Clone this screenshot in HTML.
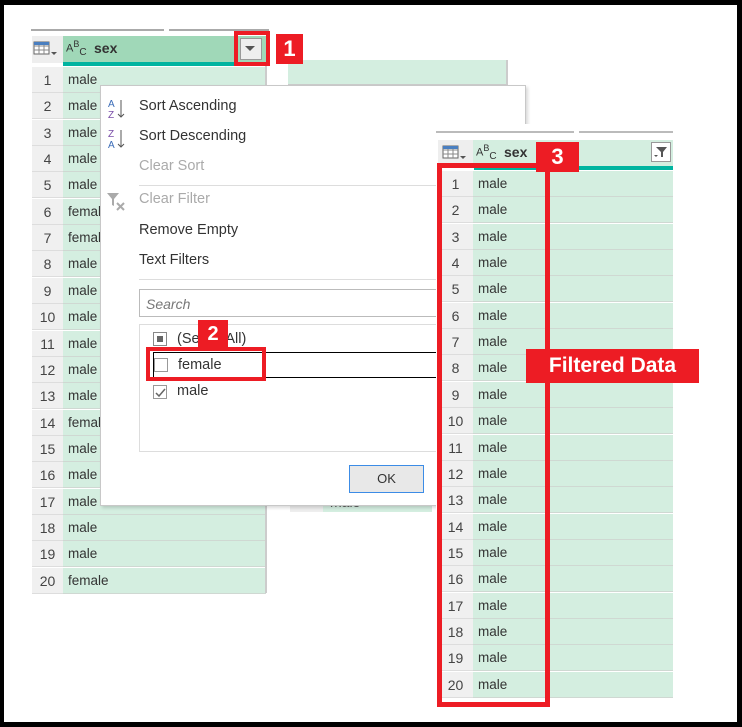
<!DOCTYPE html>
<html><head><meta charset="utf-8"><style>
*{margin:0;padding:0;box-sizing:border-box}
body{width:742px;height:727px;background:#000;position:relative;overflow:hidden;font-family:"Segoe UI","Liberation Sans","DejaVu Sans",sans-serif;font-size:13.5px;color:#333}
.frame{position:absolute;left:4px;top:5px;width:733px;height:717px;background:#fff;overflow:hidden}
.abs{position:absolute}
.num{position:absolute;background:#f0f0f0;color:#444;text-align:center;font-size:14px;line-height:26px;border-bottom:1px solid #ddd}
.cell{position:absolute;background:#d4eee0;line-height:26px;padding-left:5px;border-bottom:1px solid #cfd8d2}
.red{position:absolute;border:4px solid #ed1c24}
.lab{position:absolute;background:#ed1c24;color:#fff;font-weight:bold;text-align:center;font-family:"Liberation Sans",sans-serif}
.mi{position:absolute;left:139px;font-size:14.5px;color:#333}
.dis{color:#aaa}
</style></head><body>
<div class="frame">
<div style="position:absolute;left:-4px;top:-5px;width:742px;height:727px">
<div class="abs" style="left:31px;top:29px;width:133px;height:2px;background:#aaa"></div>
<div class="abs" style="left:169px;top:29px;width:100px;height:2px;background:#aaa"></div>
<div class="abs" style="left:32px;top:36px;width:31px;height:27px;background:#eee"></div>
<svg class="abs" style="left:33px;top:41px" width="26" height="16"><rect x="1" y="1" width="15" height="12" fill="#fff" stroke="#666"/><path d="M1 5H16M1 9H16M6 1V13M11 1V13" stroke="#888"/><rect x="1" y="1" width="15" height="3" fill="#4a7fc0"/><path d="M18 11l3 3 3-3z" fill="#555"/></svg>
<div class="abs" style="left:63px;top:36px;width:203px;height:27px;background:#a0d8b8"></div>
<div class="abs" style="left:63px;top:62px;width:203px;height:4px;background:#00b4a0"></div>
<div class="abs" style="left:66px;top:39px;font-size:11px;color:#333">A<sup style="font-size:9px">B</sup><sub style="font-size:10px">C</sub></div>
<div class="abs" style="left:94px;top:40px;font-weight:bold;font-size:14px">sex</div>
<div class="abs" style="left:240px;top:38px;width:22px;height:22px;background:#eee;border:1px solid #999"></div>
<svg class="abs" style="left:245px;top:46px" width="12" height="6"><path d="M0 0h10l-5 5z" fill="#555"/></svg>
<div id="lrows"></div>
<div class="abs" style="left:265px;top:66px;width:2px;height:527px;background:#ccc"></div>
<div class="abs" style="left:288px;top:60px;width:220px;height:26px;background:#d4eee0;border-right:2px solid #ccc;border-bottom:2px solid #ccc"></div>
<div class="abs" style="left:290px;top:492px;width:142px;height:20px;background:#d4eee0"></div>
<div class="abs" style="left:290px;top:492px;width:33px;height:20px;background:#eee"></div>
<div class="abs" style="left:330px;top:494px;font-size:14px;color:#555">male</div>
<div class="abs" style="left:100px;top:85px;width:426px;height:421px;background:#fff;border:1px solid #c8c8c8;box-shadow:2px 2px 3px rgba(0,0,0,.15)"></div>
<svg class="abs" style="left:107px;top:97px" width="22" height="24"><text x="1" y="10" font-size="10" fill="#3b6cb8" font-family="Liberation Sans">A</text><text x="1" y="21" font-size="10" fill="#7a4ea8" font-family="Liberation Sans">Z</text><path d="M14 3V20M11 17l3 3 3-3" stroke="#555" fill="none"/></svg>
<svg class="abs" style="left:107px;top:127px" width="22" height="24"><text x="1" y="10" font-size="10" fill="#7a4ea8" font-family="Liberation Sans">Z</text><text x="1" y="21" font-size="10" fill="#3b6cb8" font-family="Liberation Sans">A</text><path d="M14 3V20M11 17l3 3 3-3" stroke="#555" fill="none"/></svg>
<div class="mi" style="top:98px">Sort Ascending</div>
<div class="mi" style="top:128px">Sort Descending</div>
<div class="mi dis" style="top:158px">Clear Sort</div>
<div class="abs" style="left:139px;top:185px;width:387px;height:1px;background:#ddd"></div>
<svg class="abs" style="left:106px;top:191px" width="22" height="22"><path d="M1 2h12l-5 6v7l-2-1V8z" fill="#aaa"/><path d="M11 12l7 7M18 12l-7 7" stroke="#aaa" stroke-width="2"/></svg>
<div class="mi dis" style="top:191px">Clear Filter</div>
<div class="mi" style="top:222px">Remove Empty</div>
<div class="mi" style="top:252px">Text Filters</div>
<div class="abs" style="left:139px;top:279px;width:387px;height:1px;background:#ddd"></div>
<div class="abs" style="left:139px;top:289px;width:300px;height:28px;border:1px solid #bbb"></div>
<div class="abs" style="left:146px;top:296px;font-style:italic;color:#777;font-size:14px">Search</div>
<div class="abs" style="left:139px;top:324px;width:300px;height:128px;border:1px solid #ddd"></div>
<div class="abs" style="left:153px;top:332px;width:14px;height:14px;border:1px solid #888;background:#fff"></div>
<div class="abs" style="left:157px;top:336px;width:6px;height:6px;background:#666"></div>
<div class="abs" style="left:177px;top:331px;font-size:14.5px">(Select All)</div>
<div class="abs" style="left:153px;top:352px;width:290px;height:26px;border-top:1px solid #000;border-bottom:1px solid #000;border-left:1px solid #000"></div>
<div class="abs" style="left:154px;top:358px;width:14px;height:14px;border:1px solid #999"></div>
<div class="abs" style="left:178px;top:357px;font-size:14.5px">female</div>
<div class="abs" style="left:153px;top:385px;width:14px;height:14px;border:1px solid #999"></div>
<svg class="abs" style="left:154px;top:386px" width="13" height="13"><path d="M2 7l3 3 6-7" stroke="#666" stroke-width="1.5" fill="none"/></svg>
<div class="abs" style="left:177px;top:383px;font-size:14.5px">male</div>
<div class="abs" style="left:349px;top:465px;width:75px;height:28px;background:#e8e8e8;border:1px solid #3c8ce6;text-align:center;line-height:26px;font-size:13px">OK</div>
<div class="abs" style="left:436px;top:124px;width:306px;height:600px;background:#fff"></div>
<div class="abs" style="left:436px;top:131px;width:138px;height:2px;background:#bbb"></div>
<div class="abs" style="left:579px;top:131px;width:94px;height:2px;background:#bbb"></div>
<div class="abs" style="left:438px;top:140px;width:35px;height:27px;background:#eee"></div>
<svg class="abs" style="left:442px;top:145px" width="26" height="16"><rect x="1" y="1" width="15" height="12" fill="#fff" stroke="#666"/><path d="M1 5H16M1 9H16M6 1V13M11 1V13" stroke="#888"/><rect x="1" y="1" width="15" height="3" fill="#4a7fc0"/><path d="M18 11l3 3 3-3z" fill="#555"/></svg>
<div class="abs" style="left:473px;top:140px;width:200px;height:27px;background:#d4eee0"></div>
<div class="abs" style="left:474px;top:166px;width:199px;height:4px;background:#00b4a0"></div>
<div class="abs" style="left:476px;top:143px;font-size:11px">A<sup style="font-size:9px">B</sup><sub style="font-size:10px">C</sub></div>
<div class="abs" style="left:504px;top:144px;font-weight:bold;font-size:14px">sex</div>
<div class="abs" style="left:651px;top:142px;width:20px;height:20px;border:1px solid #999;background:#fff"></div>
<svg class="abs" style="left:653px;top:145px" width="16" height="14"><path d="M3 2h11l-4 5v5h-2V7z" fill="#555"/><path d="M1 10l2 2 2-2z" fill="#555"/></svg>
<div id="rrows"></div>
<div class="red" style="left:234px;top:31px;width:36px;height:35px"></div>
<div class="lab" style="left:276px;top:34px;width:27px;height:30px;font-size:22px;line-height:30px">1</div>
<div class="red" style="left:146px;top:347px;width:120px;height:34px"></div>
<div class="lab" style="left:198px;top:320px;width:30px;height:28px;font-size:20px;line-height:28px">2</div>
<div class="red" style="left:437px;top:163px;width:113px;height:544px;border-width:5px"></div>
<div class="lab" style="left:536px;top:142px;width:43px;height:30px;font-size:22px;line-height:30px">3</div>
<div class="lab" style="left:526px;top:349px;width:173px;height:34px;font-size:21px;line-height:34px">Filtered Data</div>
</div>
</div>
<script>
var l=['male','male','male','male','male','female','female','male','male','male','male','male','male','female','male','male','male','male','male','female'];
var h='';
for(var i=0;i<20;i++){var y=67+i*26.35;
 h+='<div class="num" style="left:32px;top:'+y+'px;width:31px;height:26px">'+(i+1)+'</div>';
 h+='<div class="cell" style="left:63px;top:'+y+'px;width:203px;height:26px">'+l[i]+'</div>';}
document.getElementById('lrows').innerHTML=h;
h='';
for(var i=0;i<20;i++){var y=171+i*26.35;
 h+='<div class="num" style="left:438px;top:'+y+'px;width:35px;height:26px">'+(i+1)+'</div>';
 h+='<div class="cell" style="left:473px;top:'+y+'px;width:200px;height:26px">male</div>';}
document.getElementById('rrows').innerHTML=h;
</script>
</body></html>
